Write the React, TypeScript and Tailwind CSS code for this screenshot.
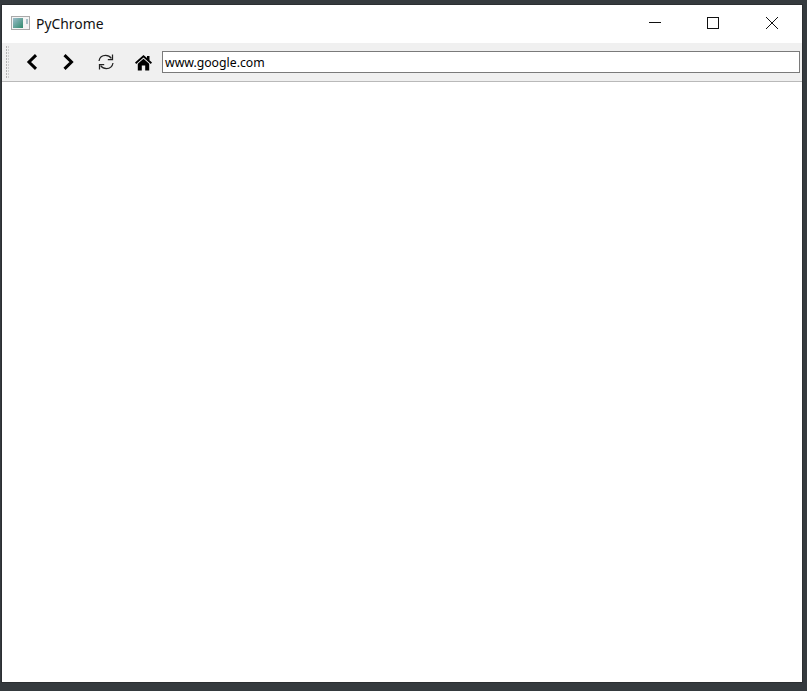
const GRIP_DOTS = Array.from({ length: 11 });

function Grip() {
  return (
    <div className="flex flex-col gap-[1px] mr-[8px]">
      {GRIP_DOTS.map((_, i) => (
        <div key={i} className="flex gap-[1px]">
          <div className="w-[1px] h-[2px] bg-[#b4b4b4]" />
          <div className="w-[1px] h-[2px] bg-[#d0d0d0]" />
        </div>
      ))}
    </div>
  );
}

export default function App() {
  return (
    <div className="w-[807px] h-[691px] bg-[#353a3e] pt-[5px] pl-[2px] pr-[5px] pb-[9px] overflow-hidden" style={{ fontFamily: '"Noto Sans", sans-serif' }}>
      <div className="h-full flex flex-col bg-white shadow-[0_0_0_1px_#2b2e31]">
        {/* Title bar */}
        <div className="h-[38px] shrink-0 flex items-center pl-[9px] pr-[23px] pb-[2px]">
          <svg width="20" height="15" viewBox="0 0 20 15" className="mr-[5px]">
            <defs>
              <linearGradient id="ic" x1="0" y1="0" x2="1" y2="1">
                <stop offset="0" stopColor="#9dbccb" />
                <stop offset="1" stopColor="#2f8a6c" />
              </linearGradient>
            </defs>
            <rect x="0.5" y="0.5" width="18" height="13" fill="#f4f4f4" stroke="#a9a9a9" />
            <rect x="2" y="2" width="10" height="10" fill="url(#ic)" />
            <rect x="15" y="3" width="2" height="5" fill="#a9c0c8" />
          </svg>
          <span className="text-[13.9px] leading-none text-[#111] pt-[2px]">PyChrome</span>
          <div className="ml-auto flex items-center">
            <svg width="14" height="14" viewBox="0 0 14 14" className="mr-[44px]">
              <path d="M1 6.5H13" stroke="#111" strokeWidth="1" />
            </svg>
            <svg width="14" height="14" viewBox="0 0 14 14" className="mr-[45px]">
              <rect x="1.5" y="1.5" width="11" height="11" fill="none" stroke="#111" strokeWidth="1" />
            </svg>
            <svg width="14" height="14" viewBox="0 0 14 14">
              <path d="M1 1L13 13M13 1L1 13" stroke="#111" strokeWidth="1" />
            </svg>
          </div>
        </div>

        {/* Toolbar */}
        <div className="h-[39px] shrink-0 flex items-center bg-[#f0f0f0] border-b border-[#b9b9b9] pl-[4px] pr-[2px]">
          <Grip />
          <svg width="14" height="18" viewBox="0 0 14 18" className="ml-[8px] mr-[22px]">
            <path d="M11 2.2L4 9L11 15.8" fill="none" stroke="#000" strokeWidth="3" />
          </svg>
          <svg width="14" height="18" viewBox="0 0 14 18" className="mr-[22px]">
            <path d="M3.5 2.2L10.5 9L3.5 15.8" fill="none" stroke="#000" strokeWidth="3" />
          </svg>
          <svg width="18" height="18" viewBox="0 0 18 18" className="mr-[20px]">
            <path d="M2 8C2.6 4.6 5.4 2.4 8.6 2.4C11 2.4 13 3.5 14.4 5.4" fill="none" stroke="#222" strokeWidth="1.25" />
            <path d="M16 10C15.4 13.4 12.6 15.6 9.4 15.6C7 15.6 5 14.5 3.6 12.6" fill="none" stroke="#222" strokeWidth="1.25" />
            <path d="M15.5 1.5V6.5H10.8" fill="none" stroke="#222" strokeWidth="1.25" />
            <path d="M2.5 16.5V11.5H7.2" fill="none" stroke="#222" strokeWidth="1.25" />
          </svg>
          <svg width="17" height="17" viewBox="0 0 17 17" className="mr-[10px] shrink-0">
            <path d="M8.5 1L12 4V2H14.5V6.2L17 8.6L15.8 9.9L8.5 3.4L1.2 9.9L0 8.6Z" fill="#000" />
            <path d="M8.5 4.8L14.2 9.8V16.5H10.2V11.5H6.8V16.5H2.8V9.8Z" fill="#000" />
          </svg>
          <div className="flex-1 h-[22px] border border-[#7a7a7a] bg-white flex items-center pl-[2px] pt-[2px] text-[12.25px] text-black leading-none">
            www.google.com
          </div>
        </div>

        <div className="flex-1 bg-white" />
      </div>
    </div>
  );
}
